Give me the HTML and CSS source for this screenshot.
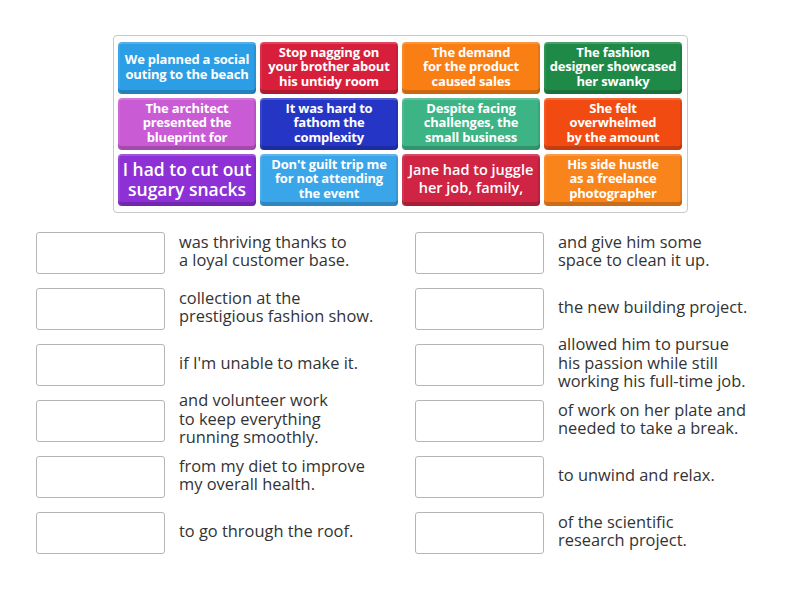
FILE: index.html
```html
<!DOCTYPE HTML>
<html>
<head>
<meta http-equiv="Content-Type" content="text/html; charset=utf-8">
<title>Match up</title>
<link rel="stylesheet" href="styles.css">
</head>
<body>
<section class="bank">
	<div class="tile blue">We planned a social<br>outing to the beach</div>
	<div class="tile red">Stop nagging on<br>your brother about<br>his untidy room</div>
	<div class="tile orange">The demand<br>for the product<br>caused sales</div>
	<div class="tile green">The fashion<br>designer showcased<br>her swanky</div>
	<div class="tile pink">The architect<br>presented the<br>blueprint for</div>
	<div class="tile navy">It was hard to<br>fathom the<br>complexity</div>
	<div class="tile teal">Despite facing<br>challenges, the<br>small business</div>
	<div class="tile flame">She felt<br>overwhelmed<br>by the amount</div>
	<div class="tile purple big">I had to cut out<br>sugary snacks</div>
	<div class="tile sky">Don't guilt trip me<br>for not attending<br>the event</div>
	<div class="tile crimson mid">Jane had to juggle<br>her job, family,</div>
	<div class="tile amber">His side hustle<br>as a freelance<br>photographer</div>
</section>

<section class="answers">
	<div class="row"><div class="slot"></div><p>was thriving thanks to<br>a loyal customer base.</p></div>
	<div class="row"><div class="slot"></div><p>and give him some<br>space to clean it up.</p></div>
	<div class="row"><div class="slot"></div><p>collection at the<br>prestigious fashion show.</p></div>
	<div class="row"><div class="slot"></div><p>the new building project.</p></div>
	<div class="row"><div class="slot"></div><p>if I'm unable to make it.</p></div>
	<div class="row"><div class="slot"></div><p>allowed him to pursue<br>his passion while still<br>working his full-time job.</p></div>
	<div class="row"><div class="slot"></div><p>and volunteer work<br>to keep everything<br>running smoothly.</p></div>
	<div class="row"><div class="slot"></div><p>of work on her plate and<br>needed to take a break.</p></div>
	<div class="row"><div class="slot"></div><p>from my diet to improve<br>my overall health.</p></div>
	<div class="row"><div class="slot"></div><p>to unwind and relax.</p></div>
	<div class="row"><div class="slot"></div><p>to go through the roof.</p></div>
	<div class="row"><div class="slot"></div><p>of the scientific<br>research project.</p></div>
</section>
</body>
</html>
```

FILE: styles.css
```css
*{
	margin: 0;
	padding: 0;
	box-sizing: border-box;
}

body{
	background: #fff;
	font-family: "Open Sans", "Liberation Sans", sans-serif;
	color: #333;
}

.bank{
	width: 575px;
	margin: 35px auto 0;
	padding: 6px 5px;
	border: 1px solid #c8c8c8;
	border-radius: 4px;
	display: grid;
	grid-template-columns: repeat(4, 138px);
	grid-auto-rows: 52px;
	gap: 4px 4px;
	justify-content: center;
}

.tile{
	display: flex;
	align-items: center;
	justify-content: center;
	text-align: center;
	padding: 0 1px 3px;
	border-radius: 4px;
	color: #fff;
	font-family: "Open Sans", sans-serif;
	font-weight: 700;
	font-size: 13px;
	line-height: 14.5px;
	letter-spacing: -0.2px;
	white-space: nowrap;
	box-shadow: inset 0 -4px 0 rgba(0,0,0,0.18), inset 0 2px 0 rgba(255,255,255,0.18), inset 2px 0 0 rgba(255,255,255,0.08), inset -2px 0 0 rgba(0,0,0,0.08);
}

.tile.big{
	font-size: 17.5px;
	line-height: 20px;
	font-weight: 600;
	letter-spacing: 0;
}
.tile.mid{
	font-size: 14.5px;
	line-height: 18px;
	font-weight: 600;
	letter-spacing: 0;
}

.blue{ background: #2b9ee6; }
.red{ background: #d71f3b; }
.orange{ background: #f97e14; }
.green{ background: #1f8a48; }
.pink{ background: #c95bd4; }
.navy{ background: #2536c6; }
.teal{ background: #3db486; }
.flame{ background: #f14b12; }
.purple{ background: #8d30d6; }
.sky{ background: #3aa5e8; }
.crimson{ background: #cf2444; }
.amber{ background: #f9841b; }

.answers{
	margin: 19px 0 0 36px;
	display: grid;
	grid-template-columns: 379px 379px;
	grid-auto-rows: 42px;
	gap: 14px 0;
}

.row{
	display: flex;
	align-items: center;
}

.slot{
	flex: none;
	width: 129px;
	height: 42px;
	border: 1px solid #b5b5b5;
	border-radius: 3px;
	background: #fff;
}

.row p{
	margin: 0 0 4px 14px;
	font-size: 16.4px;
	line-height: 18.5px;
	white-space: nowrap;
}
```
